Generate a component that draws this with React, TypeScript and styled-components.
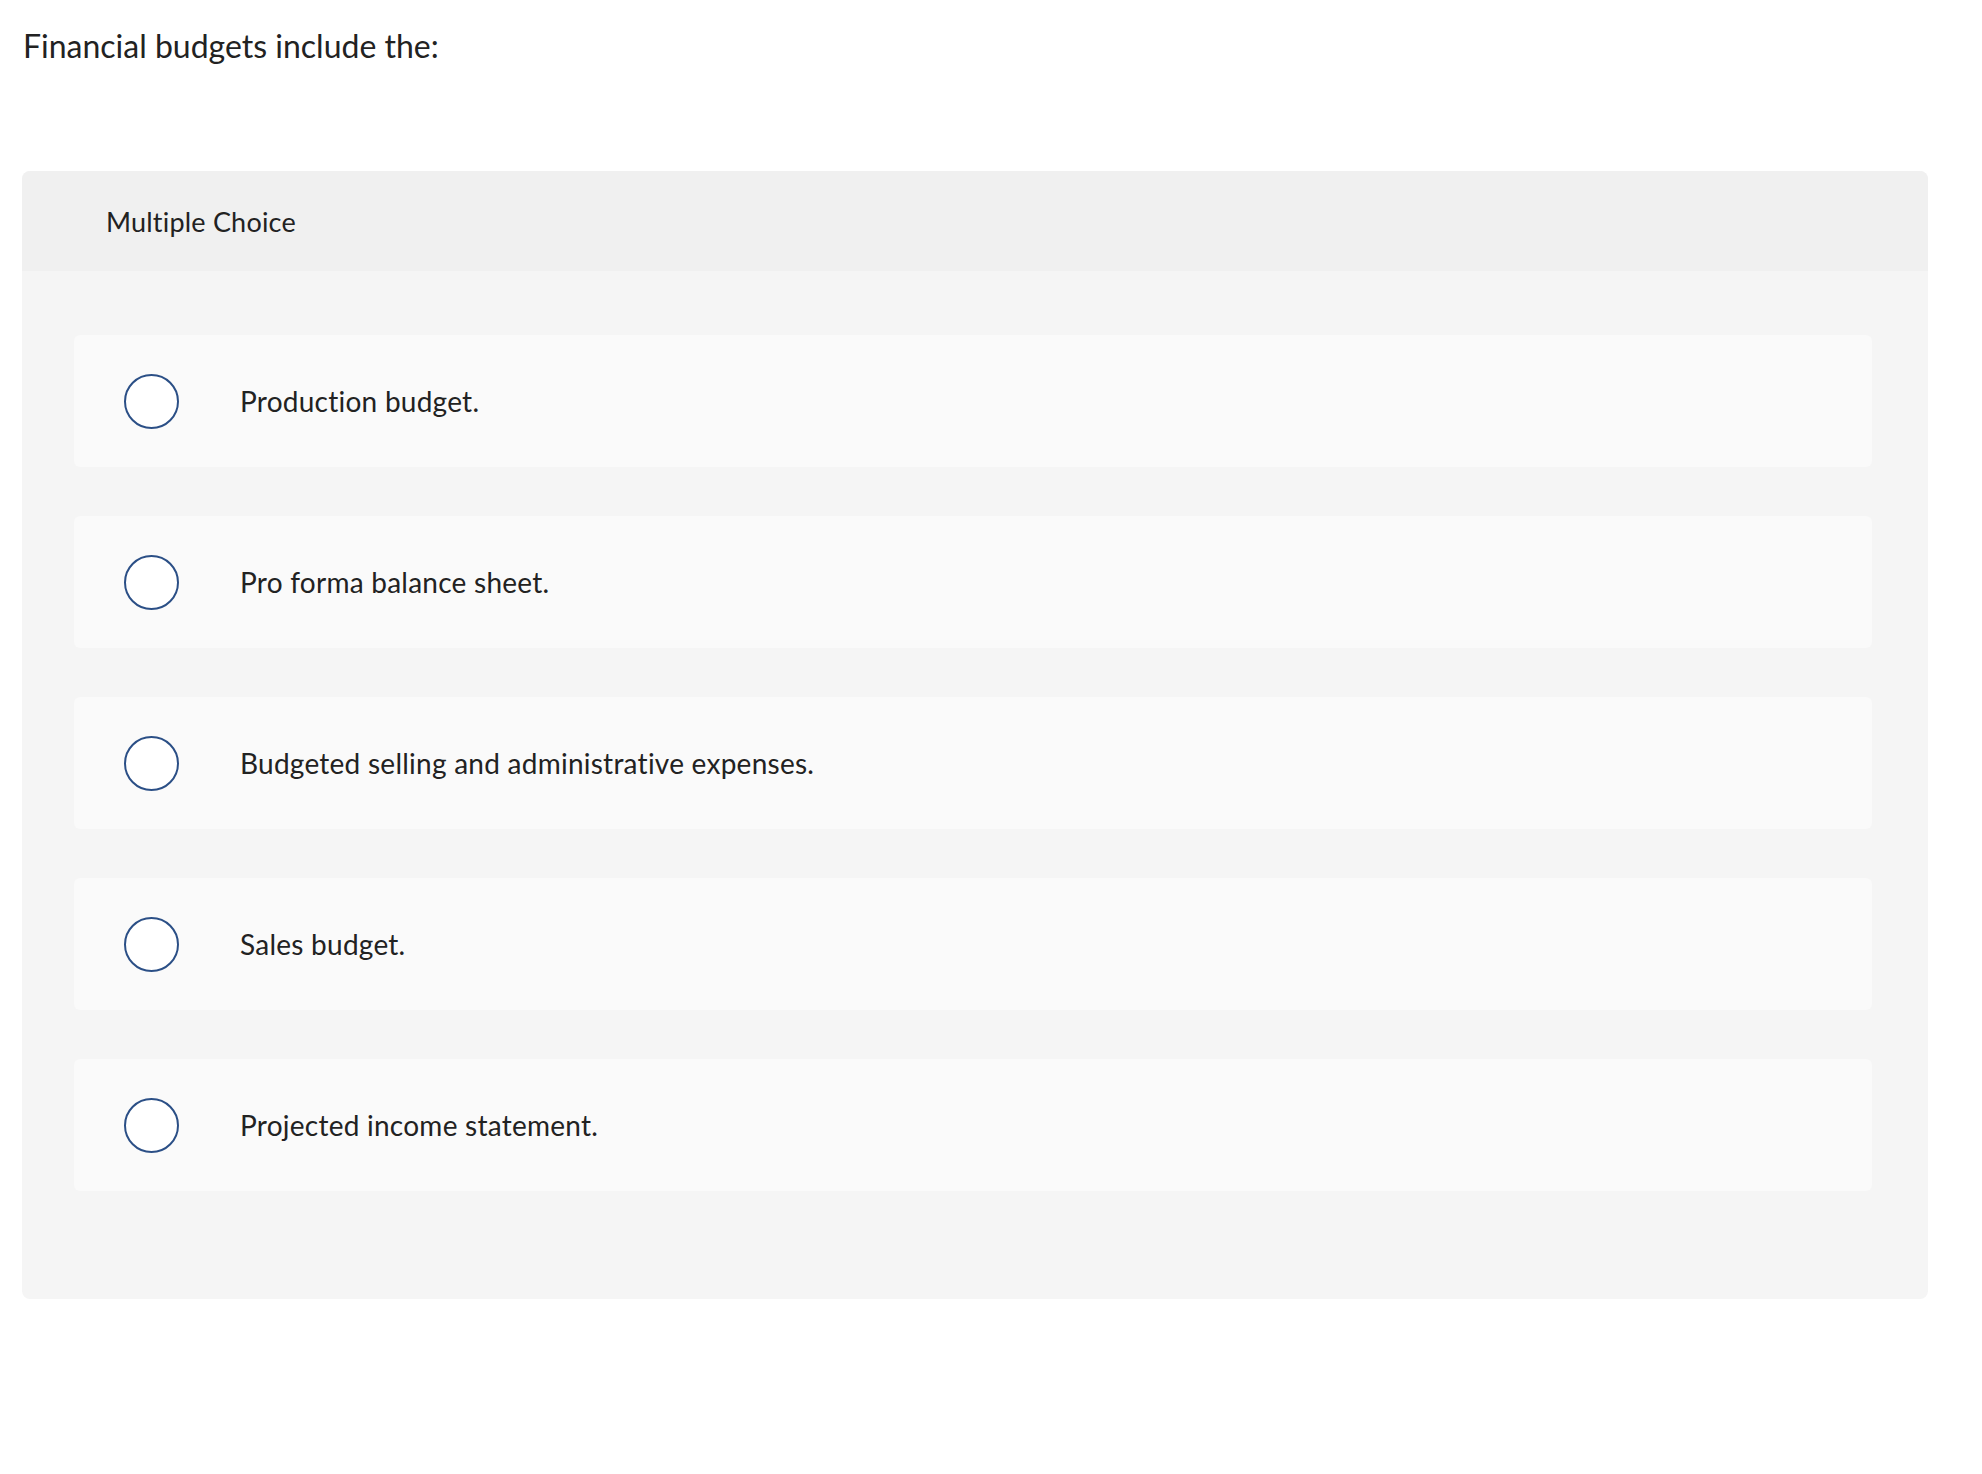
import React from "react";
import styled, { createGlobalStyle } from "styled-components";

const GlobalStyle = createGlobalStyle`
  html, body {
    margin: 0;
    padding: 0;
    background: #ffffff;
  }
  body {
    font-family: "Lato", "Open Sans", Arial, sans-serif;
    color: #222222;
    -webkit-font-smoothing: antialiased;
  }
`;

const Page = styled.div`
  padding: 0 54px 0 22px;
`;

const Question = styled.p`
  margin: 0;
  padding: 28px 0 0 1px;
  height: 171px;
  box-sizing: border-box;
  font-size: 32px;
  line-height: 36px;
  color: #222222;
`;

const Card = styled.section`
  width: 1906px;
  border-radius: 8px;
  overflow: hidden;
  background: #f5f5f5;
`;

const CardHeader = styled.header`
  height: 100px;
  display: flex;
  align-items: center;
  padding-left: 84px;
  background: #f0f0f0;
  font-size: 27px;
  letter-spacing: 0.2px;
  color: #222222;
`;

const Options = styled.div`
  display: flex;
  flex-direction: column;
  gap: 49px;
  padding: 64px 56px 108px 52px;
`;

const Option = styled.label`
  height: 132px;
  display: flex;
  align-items: center;
  gap: 61px;
  padding-left: 50px;
  border-radius: 6px;
  background: #fafafa;
  cursor: pointer;
`;

const Radio = styled.span`
  width: 55px;
  height: 55px;
  flex: none;
  box-sizing: border-box;
  border-radius: 50%;
  border: 2px solid #2b4f86;
  background: #ffffff;
`;

const OptionText = styled.span`
  font-size: 28px;
  letter-spacing: 0.25px;
  color: #222222;
`;

const choices = [
  "Production budget.",
  "Pro forma balance sheet.",
  "Budgeted selling and administrative expenses.",
  "Sales budget.",
  "Projected income statement.",
];

export default function App() {
  return (
    <>
      <GlobalStyle />
      <Page>
        <Question>Financial budgets include the:</Question>
        <Card>
          <CardHeader>Multiple Choice</CardHeader>
          <Options>
            {choices.map((c) => (
              <Option key={c}>
                <Radio />
                <OptionText>{c}</OptionText>
              </Option>
            ))}
          </Options>
        </Card>
      </Page>
    </>
  );
}
